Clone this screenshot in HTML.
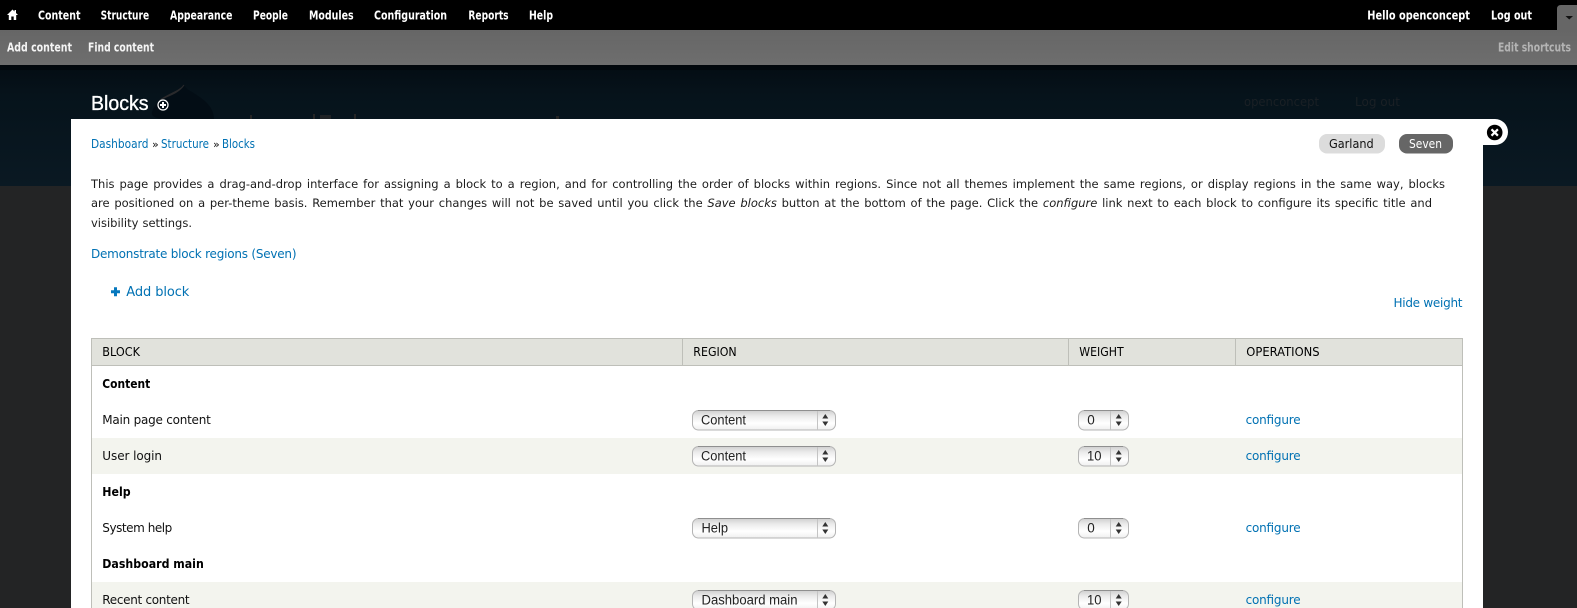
<!DOCTYPE html>
<html lang="en">
<head>
<meta charset="utf-8">
<title>Blocks</title>
<style>
html,body{margin:0;padding:0;width:1577px;height:608px;overflow:hidden;background:#232425}
svg{position:absolute;left:0;top:0;display:block}
text{font-family:"DejaVu Sans","Liberation Sans",sans-serif;font-size:12.500px;fill:#111}
.n{font-weight:bold;font-size:12.500px;fill:#fff}
.s{font-weight:bold;font-size:12.500px;fill:#f4f4f4}
.l{fill:#0071b3}
.h{fill:#000}
.b{font-weight:bold;fill:#000}
.f{font-family:"Liberation Sans",sans-serif;font-size:13.500px;fill:#222}
.p{position:absolute;left:91px;white-space:nowrap;font:12px/20px "DejaVu Sans","Liberation Sans",sans-serif;color:#1c1c1c;text-align:justify;text-align-last:justify}
</style>
</head>
<body>
<svg width="1577" height="608" viewBox="0 0 1577 608" xmlns="http://www.w3.org/2000/svg">
<defs>
<linearGradient id="gb" x1="0" y1="0" x2="0" y2="1"><stop offset="0" stop-color="#666"/><stop offset="1" stop-color="#6e6e6e"/></linearGradient>
<linearGradient id="hd" x1="0" y1="0" x2="0" y2="1"><stop offset="0" stop-color="#040c13"/><stop offset=".25" stop-color="#06131b"/><stop offset="1" stop-color="#0a1923"/></linearGradient>
<linearGradient id="sg" x1="0" y1="0" x2="0" y2="1"><stop offset="0" stop-color="#cfcfcf"/><stop offset=".3" stop-color="#ececec"/><stop offset=".65" stop-color="#fff"/><stop offset="1" stop-color="#efefef"/></linearGradient>
<symbol id="ar" viewBox="0 0 8 14" overflow="visible"><path d="M4 1 7 5.500H1ZM4 13 1 8.500H7Z" fill="#333"/></symbol>
</defs>

<rect width="1577" height="608" fill="#232425"/>
<rect y="65" width="1577" height="121" fill="url(#hd)"/>
<rect y="65" width="1577" height="5" fill="#000" opacity=".35"/>
<path d="M184 85C180 91 170 93 164 97 158 101 154 106 152 112 150 119 165 119 165 119H214C214 105 200 97 192 92 188 90 186 88 184 85Z" fill="#030d15"/>
<path d="M184 85C180 91 170 93 160 100 167 96 178 94 184 85Z" fill="#2a2a2c" stroke="#2a2a2c"/>
<text x="1244" y="106" textLength="75" lengthAdjust="spacingAndGlyphs" style="fill:#1a2025">openconcept</text>
<text x="1355" y="106" textLength="45" lengthAdjust="spacingAndGlyphs" style="fill:#1a2025">Log out</text>
<rect x="313" y="114" width="2" height="5" fill="#252525"/><rect x="354" y="114" width="2" height="5" fill="#252525"/><rect x="556" y="116" width="3" height="3" fill="#252525"/><rect x="250" y="115" width="2" height="4" fill="#252525"/><rect x="320" y="115" width="11" height="4" fill="#1f2225"/>

<rect width="1577" height="30" fill="#000"/>
<rect y="30" width="1577" height="35" fill="url(#gb)"/>
<path d="M1557 30V9Q1557 5 1561 5H1577V30Z" fill="#666"/>
<path d="M1565.500 16H1573L1569.250 19.500Z" fill="#111"/>
<path d="M12.500 9.500 7 15H8.800V20H11.300V16.500H13.700V20H16.200V15H18L16 13V10H14.500V11.500Z" fill="#fff"/>

<text class="n" x="38" y="19.500" textLength="42.500" lengthAdjust="spacingAndGlyphs">Content</text>
<text class="n" x="100.600" y="19.500" textLength="48.500" lengthAdjust="spacingAndGlyphs">Structure</text>
<text class="n" x="170" y="19.500" textLength="62.500" lengthAdjust="spacingAndGlyphs">Appearance</text>
<text class="n" x="253" y="19.500" textLength="35" lengthAdjust="spacingAndGlyphs">People</text>
<text class="n" x="309" y="19.500" textLength="44.600" lengthAdjust="spacingAndGlyphs">Modules</text>
<text class="n" x="374" y="19.500" textLength="73" lengthAdjust="spacingAndGlyphs">Configuration</text>
<text class="n" x="468.400" y="19.500" textLength="40.200" lengthAdjust="spacingAndGlyphs">Reports</text>
<text class="n" x="529" y="19.500" textLength="24" lengthAdjust="spacingAndGlyphs">Help</text>
<text class="n" x="1367.300" y="19.500" textLength="102.700" lengthAdjust="spacingAndGlyphs">Hello openconcept</text>
<text class="n" x="1491" y="19.500" textLength="41" lengthAdjust="spacingAndGlyphs">Log out</text>
<text class="s" x="7" y="51.500" textLength="65" lengthAdjust="spacingAndGlyphs">Add content</text>
<text class="s" x="88" y="51.500" textLength="66" lengthAdjust="spacingAndGlyphs">Find content</text>
<text class="s" x="1498" y="51.500" textLength="73" lengthAdjust="spacingAndGlyphs" style="fill:#b4b4b4">Edit shortcuts</text>

<text x="91" y="110" textLength="57.500" lengthAdjust="spacingAndGlyphs" style="font-family:'Liberation Sans',sans-serif;font-size:20.500px;fill:#fff;stroke:#fff;stroke-width:.35">Blocks</text>
<circle cx="163" cy="105" r="5" fill="none" stroke="#fff" stroke-width="1.200"/>
<path d="M163 102V108M160 105H166" stroke="#fff" stroke-width="2"/>

<path d="M71 119H1495A13 13 0 0 1 1495 145H1483V608H71Z" fill="#fff"/>
<circle cx="1494.700" cy="132.500" r="7.800" fill="#000"/>
<path d="M1491.500 129.300 1497.900 135.700M1497.900 129.300 1491.500 135.700" stroke="#fff" stroke-width="2.200"/>

<text class="l" x="91" y="148" textLength="57.500" lengthAdjust="spacingAndGlyphs">Dashboard</text>
<text x="152" y="148" style="font-size:11px">»</text>
<text class="l" x="161" y="148" textLength="48" lengthAdjust="spacingAndGlyphs">Structure</text>
<text x="213" y="148" style="font-size:11px">»</text>
<text class="l" x="222" y="148" textLength="33" lengthAdjust="spacingAndGlyphs">Blocks</text>

<rect x="1319" y="134" width="66" height="19.500" rx="8" fill="#dcdcdc"/>
<rect x="1399" y="134" width="54" height="19.500" rx="8" fill="#666"/>
<text x="1329" y="148" textLength="44.700" lengthAdjust="spacingAndGlyphs">Garland</text>
<text x="1409" y="148" textLength="33" lengthAdjust="spacingAndGlyphs" style="fill:#fff">Seven</text>

<text class="l" x="91" y="258" textLength="205.500" lengthAdjust="spacing" style="font-size:12px">Demonstrate block regions (Seven)</text>
<path d="M111 291.700H120M115.500 287.200V296.200" stroke="#0678be" stroke-width="3"/>
<text class="l" x="126.300" y="296" textLength="63" lengthAdjust="spacing" style="font-size:13px">Add block</text>
<text class="l" x="1393.500" y="307" textLength="69" lengthAdjust="spacing" style="font-size:12px">Hide weight</text>

<rect x="91" y="338" width="1372" height="28" fill="#e1e2dc"/>
<path d="M91.500 608V338.500H1462.500V608M91 365.500H1463M682.500 339V365M1068.500 339V365M1235.500 339V365" fill="none" stroke="#bebfb9"/>
<text class="h" x="102.300" y="356" textLength="37.700" lengthAdjust="spacingAndGlyphs">BLOCK</text>
<text class="h" x="693.300" y="356" textLength="43.400" lengthAdjust="spacingAndGlyphs">REGION</text>
<text class="h" x="1079.300" y="356" textLength="44.400" lengthAdjust="spacingAndGlyphs">WEIGHT</text>
<text class="h" x="1246.300" y="356" textLength="73.300" lengthAdjust="spacingAndGlyphs">OPERATIONS</text>

<rect x="92" y="438" width="1370" height="36" fill="#f3f4ee"/>
<rect x="92" y="582" width="1370" height="26" fill="#f3f4ee"/>

<text class="b" x="102.300" y="388" textLength="48" lengthAdjust="spacingAndGlyphs">Content</text>
<text class="b" x="102.300" y="496" textLength="28.300" lengthAdjust="spacingAndGlyphs">Help</text>
<text class="b" x="102.300" y="568" textLength="101.500" lengthAdjust="spacingAndGlyphs">Dashboard main</text>
<text x="102.300" y="424" textLength="108.500" lengthAdjust="spacing" style="font-size:12px">Main page content</text>
<text x="102.300" y="460" textLength="59.700" lengthAdjust="spacing" style="font-size:12px">User login</text>
<text x="102.300" y="532" textLength="70" lengthAdjust="spacing" style="font-size:12px">System help</text>
<text x="102.300" y="604" textLength="87.300" lengthAdjust="spacing" style="font-size:12px">Recent content</text>

<g fill="url(#sg)" stroke="#b4b4b4">
<rect x="692.500" y="410.500" width="143" height="19.500" rx="6"/>
<rect x="692.500" y="446.500" width="143" height="19.500" rx="6"/>
<rect x="692.500" y="518.500" width="143" height="19.500" rx="6"/>
<rect x="692.500" y="590.500" width="143" height="19.500" rx="6"/>
<rect x="1078.500" y="410.500" width="50" height="19.500" rx="6"/>
<rect x="1078.500" y="446.500" width="50" height="19.500" rx="6"/>
<rect x="1078.500" y="518.500" width="50" height="19.500" rx="6"/>
<rect x="1078.500" y="590.500" width="50" height="19.500" rx="6"/>
</g>
<path d="M698 410.500H830M698 446.500H830M698 518.500H830M698 590.500H830M1084 410.500H1123M1084 446.500H1123M1084 518.500H1123M1084 590.500H1123" stroke="#8f8f8f"/>
<path d="M817.500 411V430M817.500 447V466M817.500 519V538M817.500 591V608M1110.500 411V430M1110.500 447V466M1110.500 519V538M1110.500 591V608" stroke="#c4c4c4"/>
<use href="#ar" x="821.300" y="413" width="8" height="14"/>
<use href="#ar" x="821.300" y="449" width="8" height="14"/>
<use href="#ar" x="821.300" y="521" width="8" height="14"/>
<use href="#ar" x="821.300" y="593" width="8" height="14"/>
<use href="#ar" x="1114.700" y="413" width="8" height="14"/>
<use href="#ar" x="1114.700" y="449" width="8" height="14"/>
<use href="#ar" x="1114.700" y="521" width="8" height="14"/>
<use href="#ar" x="1114.700" y="593" width="8" height="14"/>

<text class="f" x="701" y="424.500" textLength="45" lengthAdjust="spacingAndGlyphs">Content</text>
<text class="f" x="701" y="460.500" textLength="45" lengthAdjust="spacingAndGlyphs">Content</text>
<text class="f" x="701.500" y="532.500" textLength="26.500" lengthAdjust="spacingAndGlyphs">Help</text>
<text class="f" x="701.500" y="604.500" textLength="96" lengthAdjust="spacingAndGlyphs">Dashboard main</text>
<text class="f" x="1087.300" y="424.500">0</text>
<text class="f" x="1087" y="460.500" textLength="14.500" lengthAdjust="spacingAndGlyphs">10</text>
<text class="f" x="1087.300" y="532.500">0</text>
<text class="f" x="1087" y="604.500" textLength="14.500" lengthAdjust="spacingAndGlyphs">10</text>

<text class="l" x="1245.600" y="424" textLength="55" lengthAdjust="spacing" style="font-size:12px">configure</text>
<text class="l" x="1245.600" y="460" textLength="55" lengthAdjust="spacing" style="font-size:12px">configure</text>
<text class="l" x="1245.600" y="532" textLength="55" lengthAdjust="spacing" style="font-size:12px">configure</text>
<text class="l" x="1245.600" y="604" textLength="55" lengthAdjust="spacing" style="font-size:12px">configure</text>
</svg>

<div class="p" style="top:174px;width:1354px;font-size:11.500px">This page provides a drag-and-drop interface for assigning a block to a region, and for controlling the order of blocks within regions. Since not all themes implement the same regions, or display regions in the same way, blocks</div>
<div class="p" style="top:193px;width:1341px;font-size:11.500px">are positioned on a per-theme basis. Remember that your changes will not be saved until you click the <em>Save blocks</em> button at the bottom of the page. Click the <em>configure</em> link next to each block to configure its specific title and</div>
<div class="p" style="top:213px;width:101px;font-size:11.500px">visibility settings.</div>
</body>
</html>
